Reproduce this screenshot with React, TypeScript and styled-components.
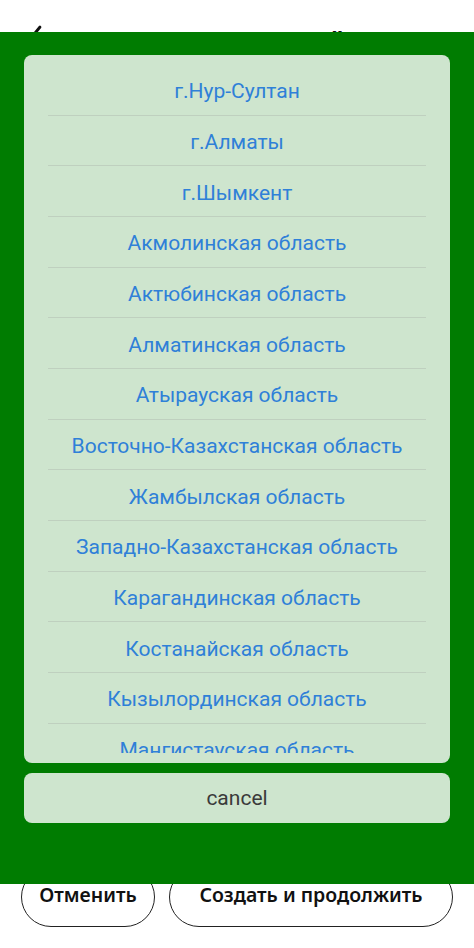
import React from 'react';
import styled, { createGlobalStyle } from 'styled-components';

const regions = [
  'г.Нур-Султан',
  'г.Алматы',
  'г.Шымкент',
  'Акмолинская область',
  'Актюбинская область',
  'Алматинская область',
  'Атырауская область',
  'Восточно-Казахстанская область',
  'Жамбылская область',
  'Западно-Казахстанская область',
  'Карагандинская область',
  'Костанайская область',
  'Кызылординская область',
  'Мангистауская область',
  'Павлодарская область',
  'Северо-Казахстанская область',
  'Туркестанская область',
];

const GlobalStyle = createGlobalStyle`
  html, body {
    margin: 0;
    padding: 0;
    background: #fff;
  }
  * { box-sizing: border-box; }
`;

const Page = styled.div`
  position: relative;
  width: 474px;
  height: 948px;
  overflow: hidden;
  background: #fff;
  display: flex;
  flex-direction: column;
  font-family: 'Noto Sans', Roboto, sans-serif;
`;

const Header = styled.div`
  display: flex;
  align-items: flex-start;
  gap: 26px;
  height: 84px;
  padding: 25px 24px 0 28px;
`;

const BackButton = styled.button`
  border: none;
  background: none;
  padding: 0;
  display: flex;
  color: #111;
`;

const Title = styled.h1`
  margin: 0;
  margin-top: -1px;
  font-size: 23px;
  line-height: 32px;
  font-weight: 700;
  color: #111;
`;

const Content = styled.div`
  flex: 1;
`;

const Footer = styled.div`
  display: flex;
  gap: 14px;
  padding: 0 21px 21px 21px;
`;

const PillButton = styled.button<{ $grow?: boolean }>`
  height: 60px;
  flex: ${p => (p.$grow ? '1' : '0 0 134px')};
  border: 1.5px solid #222;
  border-radius: 30px;
  background: #fff;
  font-family: 'Noto Sans', sans-serif;
  font-size: 19.5px;
  font-weight: 600;
  color: #111;
  padding: 0 0 5px;
`;

const Overlay = styled.div`
  position: absolute;
  top: 32px;
  left: 0;
  right: 0;
  bottom: 64px;
  background: #007c01;
  display: flex;
  flex-direction: column;
  gap: 10px;
  padding: 23px 24px 61px;
`;

const ListPanel = styled.div`
  flex: 1;
  background: #cee5ce;
  border-radius: 8px;
  padding: 10px 0;
  display: flex;
  min-height: 0;
`;

const Scroller = styled.div`
  flex: 1;
  overflow: hidden;
`;

const Row = styled.div`
  height: 50.67px;
  margin: 0 24px;
  padding-top: 3px;
  display: flex;
  align-items: center;
  justify-content: center;
  border-bottom: 1px solid #bfd0bf;
  font-family: Roboto, 'Noto Sans', sans-serif;
  font-size: 21px;
  color: #2f80d8;
  white-space: nowrap;
`;

const CancelPanel = styled.button`
  height: 50px;
  flex: 0 0 50px;
  border: none;
  border-radius: 8px;
  background: #cee5ce;
  font-family: Roboto, 'Noto Sans', sans-serif;
  font-size: 21px;
  color: #3a3a3a;
  padding: 0;
`;

const ChevronLeft = () => (
  <svg width="16" height="26" viewBox="0 0 16 26" fill="none">
    <path d="M12 2 L3 13 L12 24" stroke="#111" strokeWidth="2.8" strokeLinecap="round" strokeLinejoin="round" />
  </svg>
);

export default function App() {
  return (
    <>
      <GlobalStyle />
      <Page>
        <Header>
          <BackButton>
            <ChevronLeft />
          </BackButton>
          <Title>Создание организаций</Title>
        </Header>
        <Content />
        <Footer>
          <PillButton>Отменить</PillButton>
          <PillButton $grow>Создать и продолжить</PillButton>
        </Footer>
        <Overlay>
          <ListPanel>
            <Scroller>
              {regions.map(r => (
                <Row key={r}>{r}</Row>
              ))}
            </Scroller>
          </ListPanel>
          <CancelPanel>cancel</CancelPanel>
        </Overlay>
      </Page>
    </>
  );
}
